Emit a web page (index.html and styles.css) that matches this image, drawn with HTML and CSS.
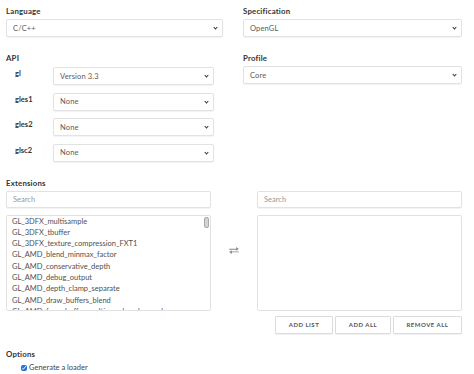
FILE: index.html
```html
<!DOCTYPE html>
<html>
<head>
    <title>glad</title>
    <meta charset="utf-8">
    <link rel="stylesheet" href="styles.css">
</head>
<body>
<div class="page">
    <div class="cols">
        <div class="field">
            <label class="lbl" for="language">Language</label>
            <div class="sel"><select id="language"><option>C/C++</option></select></div>
        </div>
        <div class="field">
            <label class="lbl" for="spec">Specification</label>
            <div class="sel"><select id="spec"><option>OpenGL</option></select></div>
        </div>
    </div>

    <div class="cols sec">
        <div class="field">
            <div class="lbl">API</div>
            <div class="api">
                <label class="api-name" for="api-gl">gl</label>
                <div class="sel"><select id="api-gl"><option>Version 3.3</option></select></div>
                <label class="api-name" for="api-gles1">gles1</label>
                <div class="sel"><select id="api-gles1"><option>None</option></select></div>
                <label class="api-name" for="api-gles2">gles2</label>
                <div class="sel"><select id="api-gles2"><option>None</option></select></div>
                <label class="api-name" for="api-glsc2">glsc2</label>
                <div class="sel"><select id="api-glsc2"><option>None</option></select></div>
            </div>
        </div>
        <div class="field">
            <label class="lbl" for="profile">Profile</label>
            <div class="sel"><select id="profile"><option>Core</option></select></div>
        </div>
    </div>

    <div class="sec">
        <div class="lbl">Extensions</div>
        <div class="ext">
            <div class="ext-col">
                <input class="search" type="text" placeholder="Search">
                <div class="list-wrap">
                    <div class="list">
                        <div>GL_3DFX_multisample</div>
                        <div>GL_3DFX_tbuffer</div>
                        <div>GL_3DFX_texture_compression_FXT1</div>
                        <div>GL_AMD_blend_minmax_factor</div>
                        <div>GL_AMD_conservative_depth</div>
                        <div>GL_AMD_debug_output</div>
                        <div>GL_AMD_depth_clamp_separate</div>
                        <div>GL_AMD_draw_buffers_blend</div>
                        <div>GL_AMD_framebuffer_multisample_advanced</div>
                        <div>GL_AMD_framebuffer_sample_positions</div>
                        <div>GL_AMD_gcn_shader</div>
                        <div>GL_AMD_gpu_shader_half_float</div>
                        <div>GL_AMD_gpu_shader_int16</div>
                        <div>GL_AMD_gpu_shader_int64</div>
                        <div>GL_AMD_interleaved_elements</div>
                        <div>GL_AMD_multi_draw_indirect</div>
                        <div>GL_AMD_name_gen_delete</div>
                        <div>GL_AMD_occlusion_query_event</div>
                        <div>GL_AMD_performance_monitor</div>
                        <div>GL_AMD_pinned_memory</div>
                        <div>GL_AMD_query_buffer_object</div>
                        <div>GL_AMD_sample_positions</div>
                        <div>GL_AMD_seamless_cubemap_per_texture</div>
                        <div>GL_AMD_shader_atomic_counter_ops</div>
                        <div>GL_AMD_shader_ballot</div>
                        <div>GL_AMD_shader_explicit_vertex_parameter</div>
                        <div>GL_AMD_shader_stencil_export</div>
                        <div>GL_AMD_shader_trinary_minmax</div>
                        <div>GL_AMD_sparse_texture</div>
                        <div>GL_AMD_stencil_operation_extended</div>
                        <div>GL_AMD_texture_texture4</div>
                        <div>GL_AMD_transform_feedback4</div>
                        <div>GL_AMD_vertex_shader_layer</div>
                        <div>GL_AMD_vertex_shader_tessellator</div>
                        <div>GL_AMD_vertex_shader_viewport_index</div>
                        <div>GL_APPLE_aux_depth_stencil</div>
                        <div>GL_APPLE_client_storage</div>
                        <div>GL_APPLE_element_array</div>
                        <div>GL_APPLE_fence</div>
                        <div>GL_APPLE_float_pixels</div>
                    </div>
                    <div class="thumb"></div>
                </div>
            </div>
            <div class="swap">
                <svg width="10" height="7" viewBox="0 0 11 8">
                    <path d="M0 2h8V0l3 2.2-3 2.2V3H0z" fill="#888"/>
                    <path d="M11 6H3v2L0 5.8l3-2.2V5h8z" fill="#888"/>
                </svg>
            </div>
            <div class="ext-col">
                <input class="search" type="text" placeholder="Search">
                <div class="list"></div>
            </div>
        </div>
        <div class="btns">
            <button class="btn">Add list</button>
            <button class="btn">Add all</button>
            <button class="btn">Remove all</button>
        </div>
    </div>

    <div class="sec-opt">
        <div class="lbl">Options</div>
        <label class="check"><input type="checkbox" checked> Generate a loader</label>
    </div>
</div>
</body>
</html>
```

FILE: styles.css
```css
body {
    margin: 0;
    background: #fff;
    font-family: Lato, "Open Sans", sans-serif;
    font-size: 8px;
    color: #333;
}

.page {
    padding: 5px 12px 0 6px;
}

.cols {
    display: grid;
    grid-template-columns: 217px 219px;
    column-gap: 20px;
}

.sec {
    margin-top: 15px;
}

.lbl {
    display: block;
    font-weight: bold;
    font-size: 7.8px;
    letter-spacing: 0.2px;
    line-height: 12px;
    height: 12px;
    color: #333;
    margin-bottom: 2px;
}

.sel {
    position: relative;
}

/* chevron of the select */
.sel::after {
    content: "";
    position: absolute;
    right: 6px;
    top: 7px;
    width: 2px;
    height: 2px;
    border-right: 1.2px solid #333;
    border-bottom: 1.2px solid #333;
    transform: rotate(45deg);
    pointer-events: none;
}

select {
    -webkit-appearance: none;
    appearance: none;
    display: block;
    width: 100%;
    height: 18px;
    margin: 0;
    padding: 0 6px;
    font-family: Lato, "Open Sans", sans-serif;
    font-size: 7.5px;
    letter-spacing: 0.15px;
    color: #5a5a5a;
    background: #fff;
    border: 1px solid #e2e2e2;
    border-radius: 2px;
    box-shadow: 0 1px 1px rgba(0, 0, 0, 0.05);
}

.api {
    display: grid;
    grid-template-columns: 38px 1fr;
    row-gap: 7.5px;
    padding: 1px 9px 0 9px;
}

.api-name {
    font-weight: bold;
    font-size: 7.5px;
    line-height: 13px;
    color: #333;
}

.ext {
    display: grid;
    grid-template-columns: 205px 46px 205px;
    margin-top: 1px;
}

.ext-col {
    display: flex;
    flex-direction: column;
    gap: 7px;
}

.search {
    display: block;
    box-sizing: border-box;
    width: 100%;
    height: 17px;
    margin: 0;
    padding: 0 6px;
    font-family: Lato, "Open Sans", sans-serif;
    font-size: 7.5px;
    color: #555;
    border: 1px solid #e2e2e2;
    border-radius: 2px;
    box-shadow: 0 1px 1px rgba(0, 0, 0, 0.05);
    outline: none;
}

.search::placeholder {
    color: #999;
}

.list-wrap {
    position: relative;
}

.list {
    box-sizing: border-box;
    height: 96px;
    overflow: hidden;
    border: 1px solid #e2e2e2;
    border-radius: 2px;
    padding: 0 8px 0 5px;
    font-size: 7.5px;
    line-height: 11.3px;
    color: #505050;
    white-space: nowrap;
}

.thumb {
    position: absolute;
    top: 2px;
    right: 2px;
    width: 3px;
    height: 9px;
    background: #d4d4d4;
    border: 1px solid #a8a8a8;
    border-radius: 2px;
}

.swap {
    display: flex;
    align-items: center;
    justify-content: center;
}

.btns {
    display: flex;
    justify-content: flex-end;
    gap: 2px;
    margin-top: 5px;
}

.btn {
    height: 18px;
    padding: 0;
    font-family: Lato, "Open Sans", sans-serif;
    font-size: 6px;
    font-weight: bold;
    letter-spacing: 0.5px;
    text-transform: uppercase;
    color: #555;
    background: #fff;
    border: 1px solid #dcdcdc;
    border-radius: 1px;
    box-shadow: 0 1px 1px rgba(0, 0, 0, 0.06);
}

.btn:nth-child(1) { width: 58px; }
.btn:nth-child(2) { width: 56px; }
.btn:nth-child(3) { width: 69px; }

.sec-opt {
    margin-top: 14px;
}

.check {
    display: flex;
    align-items: center;
    gap: 2px;
    margin-top: 1px;
    padding-left: 15px;
    font-size: 7.5px;
    line-height: 12px;
    color: #444;
}

.check input {
    width: 6px;
    height: 6px;
    margin: 0;
    accent-color: #2a6fd6;
}
```
